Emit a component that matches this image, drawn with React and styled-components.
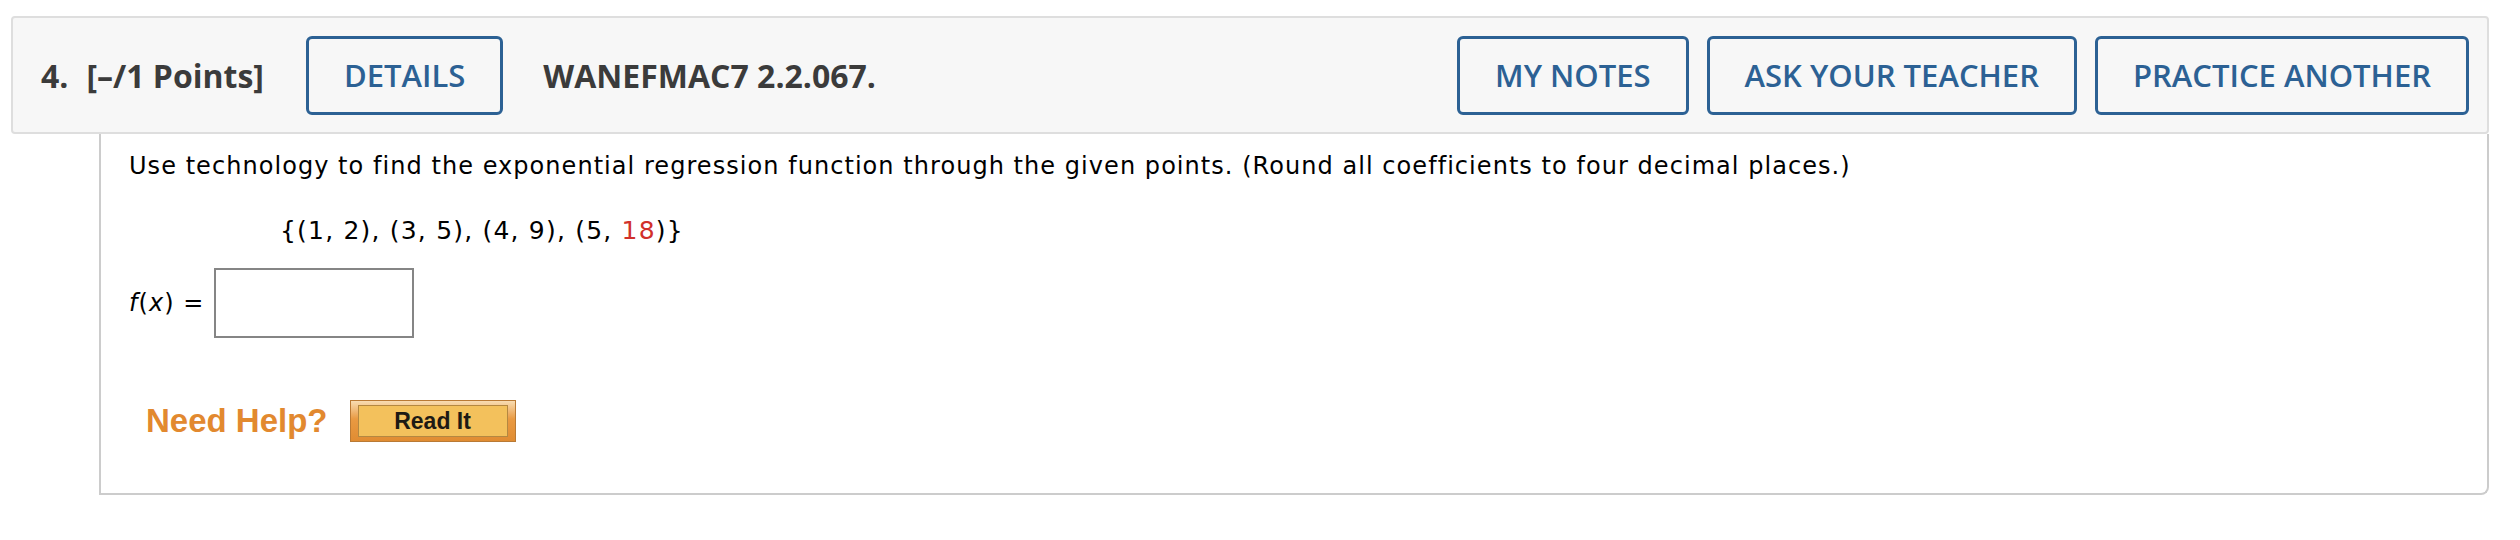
import React from "react";
import styled, { createGlobalStyle } from "styled-components";

const GlobalStyle = createGlobalStyle`
  body {
    margin: 0;
    background: #fff;
  }
`;

const Page = styled.div`
  padding: 16px 0 0 11px;
  width: 2478px;
`;

const Header = styled.header`
  display: flex;
  align-items: center;
  box-sizing: border-box;
  height: 118px;
  padding: 0 18px 0 28px;
  background: #f7f7f7;
  border: 2px solid #dedede;
  border-radius: 4px;
  font-family: "Open Sans", "Liberation Sans", sans-serif;
`;

const Label = styled.span`
  font-size: 32px;
  font-weight: 700;
  color: #3b3b3b;
  white-space: pre;
  margin-left: ${props => props.gap || 0}px;
`;

const OutlineButton = styled.button`
  box-sizing: border-box;
  height: 79px;
  padding: 0 35px;
  margin-left: ${props => props.gap || 0}px;
  background: transparent;
  border: 3px solid #2c6194;
  border-radius: 6px;
  font-family: inherit;
  font-size: 31px;
  font-weight: 600;
  color: #2c6194;
  white-space: nowrap;
`;

const Actions = styled.div`
  display: flex;
  gap: 18px;
  margin-left: auto;
`;

const Body = styled.section`
  display: flex;
  flex-direction: column;
  box-sizing: border-box;
  height: 361px;
  margin-left: 88px;
  padding: 18px 0 0 28px;
  border: 2px solid #cccccc;
  border-top: none;
  border-radius: 0 0 8px 0;
  font-family: "DejaVu Sans", Verdana, sans-serif;
  font-size: 24px;
  letter-spacing: 1.05px;
  color: #000;
`;

const Prompt = styled.p`
  margin: 0;
  line-height: 28px;
`;

const PointSet = styled.p`
  margin: 36px 0 0 151px;
  font-size: 25px;
  letter-spacing: 1.2px;
  line-height: 30px;
`;

const Highlight = styled.span`
  color: #d1302b;
`;

const AnswerRow = styled.div`
  display: flex;
  align-items: center;
  gap: 10px;
  margin-top: 22px;
`;

const AnswerInput = styled.input`
  box-sizing: border-box;
  width: 200px;
  height: 70px;
  border: 2px solid #858585;
  border-radius: 0;
  background: #fff;
`;

const HelpRow = styled.div`
  display: flex;
  align-items: center;
  gap: 22px;
  margin: 62px 0 0 17px;
  letter-spacing: 0;
`;

const HelpText = styled.span`
  font-family: "Liberation Sans", Arial, sans-serif;
  font-size: 33px;
  font-weight: 700;
  color: #e2892f;
`;

const ReadButton = styled.button`
  box-sizing: border-box;
  width: 166px;
  height: 42px;
  padding: 4px 7px;
  background: linear-gradient(#f8dcb2, #e99a42 45%, #e08c32);
  border: 1px solid #b97a35;
  border-radius: 0;
  display: flex;
`;

const ReadFace = styled.span`
  flex: 1;
  display: flex;
  align-items: center;
  justify-content: center;
  background: #f3c15c;
  border: 1px solid #b48841;
  font-family: "Liberation Sans", Arial, sans-serif;
  font-size: 23px;
  font-weight: 700;
  color: #1d1a14;
`;

const App = () => (
  <Page>
    <GlobalStyle />
    <Header>
      <Label>4.</Label>
      <Label gap={18}>[–/1 Points]</Label>
      <OutlineButton gap={42}>DETAILS</OutlineButton>
      <Label gap={40}>WANEFMAC7 2.2.067.</Label>
      <Actions>
        <OutlineButton>MY NOTES</OutlineButton>
        <OutlineButton>ASK YOUR TEACHER</OutlineButton>
        <OutlineButton>PRACTICE ANOTHER</OutlineButton>
      </Actions>
    </Header>
    <Body>
      <Prompt>
        Use technology to find the exponential regression function through the
        given points. (Round all coefficients to four decimal places.)
      </Prompt>
      <PointSet>
        {"{(1, 2), (3, 5), (4, 9), (5, "}
        <Highlight>18</Highlight>
        {")}"}
      </PointSet>
      <AnswerRow>
        <span>
          <i>f</i>(<i>x</i>) =
        </span>
        <AnswerInput type="text" />
      </AnswerRow>
      <HelpRow>
        <HelpText>Need Help?</HelpText>
        <ReadButton>
          <ReadFace>Read It</ReadFace>
        </ReadButton>
      </HelpRow>
    </Body>
  </Page>
);

export default App;
